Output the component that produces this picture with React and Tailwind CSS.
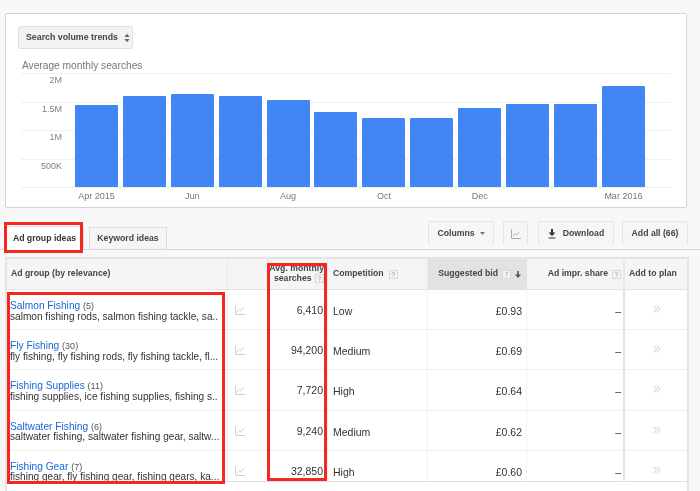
import React from "react";

const bars = [82, 91, 93, 91, 87, 75, 69, 69, 79, 83, 83, 101];
const yLabels = ["2M", "1.5M", "1M", "500K"];
const xLabels = [["Apr 2015", 0], ["Jun", 2], ["Aug", 4], ["Oct", 6], ["Dec", 8], ["Mar 2016", 11]];
const rows = [
  { name: "Salmon Fishing", n: 5, kw: "salmon fishing rods, salmon fishing tackle, sa..", vol: "6,410", comp: "Low", bid: "£0.93", h: "h-10" },
  { name: "Fly Fishing", n: 30, kw: "fly fishing, fly fishing rods, fly fishing tackle, fl...", vol: "94,200", comp: "Medium", bid: "£0.69", h: "h-10" },
  { name: "Fishing Supplies", n: 11, kw: "fishing supplies, ice fishing supplies, fishing s..", vol: "7,720", comp: "High", bid: "£0.64", h: "h-[40.5px]" },
  { name: "Saltwater Fishing", n: 6, kw: "saltwater fishing, saltwater fishing gear, saltw...", vol: "9,240", comp: "Medium", bid: "£0.62", h: "h-10" },
  { name: "Fishing Gear", n: 7, kw: "fishing gear, fly fishing gear, fishing gears, ka...", vol: "32,850", comp: "High", bid: "£0.60", h: "h-[31px]" },
];

function Help() {
  return (
    <span className="inline-flex items-center justify-center w-[9px] h-[9px] border border-[#d8d8d8] bg-[#f4f4f4] text-[7px] font-normal leading-none text-[#999]">?</span>
  );
}

function TrendIcon({ stroke = "#cfcfcf" }) {
  return (
    <svg width="10" height="10" viewBox="0 0 10 10" fill="none" stroke={stroke} strokeWidth="1">
      <path d="M0.5 0.5V9.5H10" />
      <path d="M2 7L4.3 4.6L5.6 5.8L8.8 2.6" />
    </svg>
  );
}

function Chevrons() {
  return (
    <svg width="8" height="8" viewBox="0 0 8 8" fill="none" stroke="#d6d6d6" strokeWidth="1.1">
      <path d="M0.7 0.7L3.7 4L0.7 7.3" />
      <path d="M3.9 0.7L6.9 4L3.9 7.3" />
    </svg>
  );
}

function Th({ className = "", children }) {
  return <div className={`flex items-center text-[8.7px] font-bold text-[#444] border-r border-[#e9e9e9] ${className}`}>{children}</div>;
}

export default function App() {
  return (
    <div className="relative w-[700px] h-[491px] overflow-hidden bg-[#f8f8f8] blur-[0.4px]" style={{ fontFamily: '"Liberation Sans", Arial, sans-serif' }}>
      {/* Chart card */}
      <div className="ml-[5px] mt-[13px] h-[195px] w-[682px] bg-white border border-[#d4d4d4] rounded-[2px] pl-[12px] pt-[12px]">
        <div className="flex items-center gap-[6px] w-[115px] h-[23px] pl-[7px] bg-[#f3f3f3] border border-[#e0e0e0] rounded-[2px] text-[8.8px] font-bold text-[#444] whitespace-nowrap">
          Search volume trends
          <svg width="6" height="10" viewBox="0 0 6 10" fill="#666"><path d="M3 0.8L5.6 4H0.4Z" /><path d="M3 9.2L0.4 6H5.6Z" /></svg>
        </div>
        <div className="ml-[4px] mt-[10px] text-[10.2px] leading-[13px] text-[#777]">Average monthly searches</div>
        <div className="relative ml-[3px] mt-[1px] w-[650px] h-[115px] border-b border-[#efefef]">
          {yLabels.map((l) => (
            <div key={l} className="h-[28.5px] border-t border-[#f0f0f0] pr-[609px] text-right text-[9px] leading-[12px] text-[#808080]">{l}</div>
          ))}
          <div className="absolute left-[54px] right-0 bottom-0 flex items-end gap-[4.9px] h-[114px]">
            {bars.map((h, i) => (
              <div key={i} className="w-[43px] bg-[#4285f4] rounded-t-[1px]" style={{ height: h }} />
            ))}
          </div>
        </div>
        <div className="relative ml-[57px] mt-[2px] h-[12px] text-[9px] leading-[12px] text-[#777]">
          {xLabels.map(([l, i]) => (
            <span key={l} className="absolute -translate-x-1/2 whitespace-nowrap" style={{ left: 21.5 + i * 47.9 }}>{l}</span>
          ))}
        </div>
      </div>

      {/* Toolbar */}
      <div className="flex items-end h-[42px] border-b border-[#d8d8d8] pl-[5px] pr-[12px] text-[8.7px] font-bold text-[#444]">
        <div className="flex items-center justify-center w-[79px] h-[24px] mb-[-1px] bg-white border border-b-0 border-[#e2e2e2] text-[#333]">Ad group ideas</div>
        <div className="flex items-center justify-center w-[78px] h-[22px] ml-[5px] bg-[#f5f5f5] border border-b-0 border-[#e0e0e0]">Keyword ideas</div>
        <div className="flex-1" />
        <div className="flex items-center justify-center gap-[5px] w-[66px] h-[24px] mb-[4px] bg-[#f6f6f6] border border-b-0 border-[#e4e4e4] rounded-t-[2px]">
          Columns
          <svg width="5" height="3" viewBox="0 0 5 3" fill="#777"><path d="M0 0H5L2.5 3Z" /></svg>
        </div>
        <div className="flex items-center justify-center w-[25px] h-[24px] ml-[9px] mb-[4px] bg-[#f6f6f6] border border-b-0 border-[#e4e4e4] rounded-t-[2px]">
          <TrendIcon stroke="#aaaaaa" />
        </div>
        <div className="flex items-center justify-center gap-[7px] w-[76px] h-[24px] ml-[10px] mb-[4px] bg-[#f6f6f6] border border-b-0 border-[#e4e4e4] rounded-t-[2px]">
          <svg width="8" height="10" viewBox="0 0 8 10" fill="#333"><path d="M3 0H5V3.5H7.5L4 7L0.5 3.5H3Z" /><rect x="0.5" y="8.5" width="7" height="1" /></svg>
          Download
        </div>
        <div className="flex items-center justify-center w-[66px] h-[24px] ml-[8px] mb-[4px] bg-[#f6f6f6] border border-b-0 border-[#e4e4e4] rounded-t-[2px]">Add all (66)</div>
      </div>

      {/* Table */}
      <div className="mt-[7px] ml-[5px] w-[684px] border-2 border-b-0 border-[#e4e4e4] bg-white">
        <div className="flex h-[31px] bg-[#f5f5f5] border-b border-[#e4e4e4]">
          <Th className="w-[221px] pl-[4px]">Ad group (by relevance)</Th>
          <Th className="w-[40px]"></Th>
          <Th className="w-[60px] justify-end text-right text-[8.5px] leading-[9.5px] pr-[3px]">
            <div>Avg. monthly<br />searches <span className="ml-[1px] align-middle"><Help /></span></div>
          </Th>
          <Th className="w-[100px] pl-[5px] gap-[5px]">Competition <Help /></Th>
          <Th className="w-[99px] bg-[#e2e2e2] justify-end pr-[6px] gap-[4px] border-r-0">
            Suggested bid <Help />
            <svg width="6" height="7" viewBox="0 0 6 7" fill="#555"><path d="M2.2 0H3.8V3.5H6L3 7L0 3.5H2.2Z" /></svg>
          </Th>
          <Th className="w-[98px] justify-end pr-[2px] gap-[4px] border-r-2 border-[#dcdcdc]">Ad impr. share <Help /></Th>
          <div className="flex-1 flex items-center pl-[4px] text-[8.7px] font-bold text-[#444]">Add to plan</div>
        </div>
        {rows.map((r, idx) => (
          <div key={r.name} className={`flex ${r.h} bg-white border-b ${idx === rows.length - 1 ? "border-[#dedede]" : "border-[#eeeeee]"} text-[10.5px] text-[#333]`}>
            <div className="w-[221px] pl-[3px] pr-[3px] pt-[11px] border-r border-[#f2f2f2] text-[10.2px] leading-[10.5px]">
              <div className="whitespace-nowrap"><span className="text-[#1a66d6]">{r.name}</span> <span className="text-[9px] text-[#555]">({r.n})</span></div>
              <div className="whitespace-nowrap text-[10.1px] text-[#333]">{r.kw}</div>
            </div>
            <div className="w-[40px] pl-[7px] pt-[15px] border-r border-[#f2f2f2]"><TrendIcon /></div>
            <div className="w-[60px] pr-[4px] pt-[14px] text-right border-r border-[#f2f2f2] leading-[12px]">{r.vol}</div>
            <div className="w-[100px] pl-[5px] pt-[15px] border-r border-[#f2f2f2] leading-[12px]">{r.comp}</div>
            <div className="w-[99px] pr-[4px] pt-[15px] text-right border-r border-[#f2f2f2] leading-[12px]">{r.bid}</div>
            <div className="w-[98px] pr-[2px] pt-[15px] text-right border-r-2 border-[#e4e4e4] leading-[12px]">–</div>
            <div className="flex-1 pt-[15px] pl-[28px]"><Chevrons /></div>
          </div>
        ))}
        <div className="h-[20px] bg-white" />
      </div>

      {/* Red annotation boxes */}
      <div className="absolute left-[4px] top-[222px] w-[79px] h-[31px] border-[3px] border-[#f5271f]" />
      <div className="absolute left-[7px] top-[292px] w-[218px] h-[191.5px] border-[3px] border-[#f5271f]" />
      <div className="absolute left-[267px] top-[263px] w-[59.5px] h-[218px] border-[3px] border-[#f5271f]" />
    </div>
  );
}
